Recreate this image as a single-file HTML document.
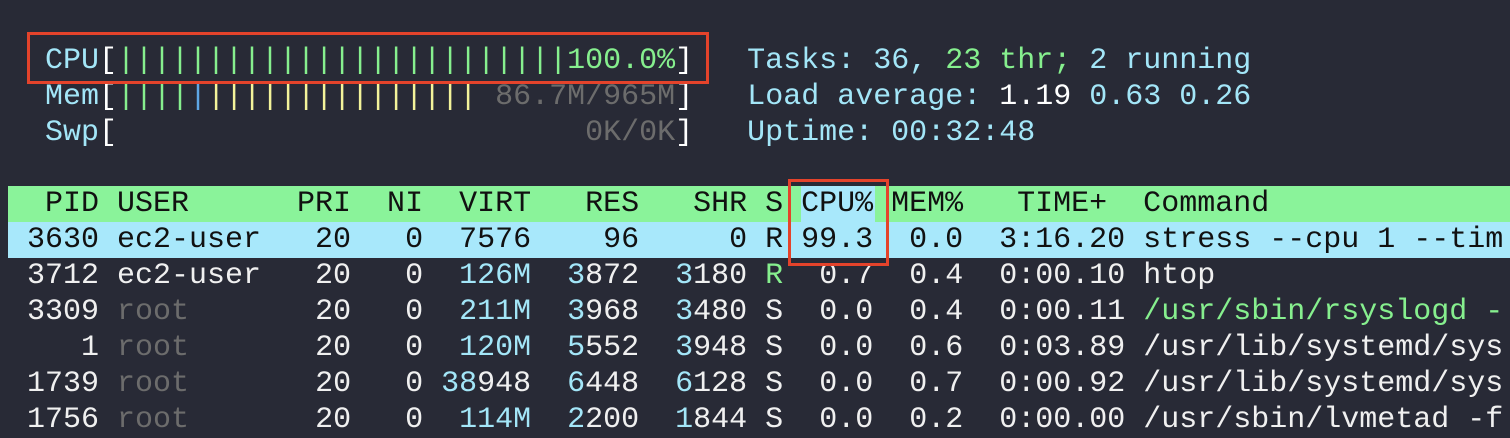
<!DOCTYPE html>
<html><head><meta charset="utf-8"><style>
html,body{margin:0;padding:0;background:#282a36;width:1510px;height:410px;overflow:hidden}
.l{position:absolute;left:9px;height:36px;line-height:36px;font-family:"Liberation Mono",monospace;font-size:30px;white-space:pre;color:#f0f0f0;letter-spacing:0}
.c{color:#a3e6f8}.g{color:#86ef8e}.y{color:#f3f39a}.b{color:#5ea7e6}.gr{color:#6c6c6c}.w{color:#ffffff}.k{color:#111}
.bar{position:absolute;left:8px;right:0;height:36px}
.box{position:absolute;border:3px solid #e4432b;box-sizing:border-box}
</style></head><body>
<div class="l" style="top:43px"><span class="c">  CPU</span><span class="w">[</span><span class="g">|||||||||||||||||||||||||100.0%</span><span class="w">]</span>   <span class="c">Tasks: </span><span class="c">36, </span><span class="g">23 thr; </span><span class="c">2 running</span></div>
<div class="l" style="top:79px"><span class="c">  Mem</span><span class="w">[</span><span class="g">||||</span><span class="b">|</span><span class="y">|||||||||||||||</span> <span class="gr">86.7M/965M</span><span class="w">]</span>   <span class="c">Load average: </span><span class="w">1.19 </span><span class="c">0.63 0.26</span></div>
<div class="l" style="top:115px"><span class="c">  Swp</span><span class="w">[</span>                          <span class="gr">0K/0K</span><span class="w">]</span>   <span class="c">Uptime: 00:32:48</span></div>
<div class="bar" style="top:186px;background:#8af39a"></div>
<div class="bar" style="top:186px;left:801px;right:auto;width:74px;background:#a8e8fb"></div>
<div class="bar" style="top:222px;background:#a8e8fb"></div>
<div class="l k" style="top:186px">  PID USER      PRI  NI  VIRT   RES   SHR S CPU% MEM%   TIME+  Command</div>
<div class="l k" style="top:222px"> 3630 ec2-user   20   0  7576    96     0 R 99.3  0.0  3:16.20 stress --cpu 1 --tim</div>
<div class="l" style="top:258px"> 3712 ec2-user   20   0  <span class="c">126M</span>  <span class="c">3</span>872  <span class="c">3</span>180 <span class="g">R</span>  0.7  0.4  0:00.10 htop</div>
<div class="l" style="top:294px"> 3309 <span class="gr">root</span>       20   0  <span class="c">211M</span>  <span class="c">3</span>968  <span class="c">3</span>480 S  0.0  0.4  0:00.11 <span class="g">/usr/sbin/rsyslogd -</span></div>
<div class="l" style="top:330px">    1 <span class="gr">root</span>       20   0  <span class="c">120M</span>  <span class="c">5</span>552  <span class="c">3</span>948 S  0.0  0.6  0:03.89 /usr/lib/systemd/sys</div>
<div class="l" style="top:366px"> 1739 <span class="gr">root</span>       20   0 <span class="c">38</span>948  <span class="c">6</span>448  <span class="c">6</span>128 S  0.0  0.7  0:00.92 /usr/lib/systemd/sys</div>
<div class="l" style="top:402px"> 1756 <span class="gr">root</span>       20   0  <span class="c">114M</span>  <span class="c">2</span>200  <span class="c">1</span>844 S  0.0  0.2  0:00.00 /usr/sbin/lvmetad -f</div>
<div class="box" style="left:27px;top:32px;width:682px;height:52px"></div>
<div class="box" style="left:788px;top:179px;width:101px;height:87px"></div>
</body></html>
